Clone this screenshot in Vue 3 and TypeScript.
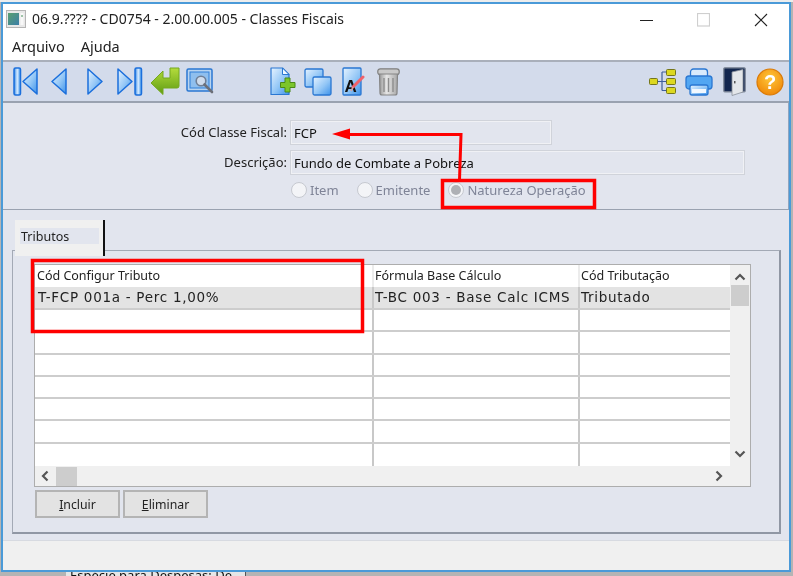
<script setup lang="ts">
const rows: string[][] = [
  ['T-FCP 001a - Perc 1,00%', 'T-BC 003 - Base Calc ICMS', 'Tributado'],
  ['', '', ''], ['', '', ''], ['', '', ''], ['', '', ''], ['', '', ''], ['', '', ''], ['', '', ''],
]
const headers: string[] = ['Cód Configur Tributo', 'Fórmula Base Cálculo', 'Cód Tributação']
</script>

<template>
  <div class="screen">
    <div class="window">
      <header class="titlebar">
        <svg class="appicon" width="20" height="18" viewBox="0 0 20 18">
          <rect x="0.5" y="0.5" width="19" height="17" fill="#e8e8e8" stroke="#b5b5b5" />
          <rect x="2" y="3" width="11" height="12" fill="url(#appg)" />
          <rect x="14.5" y="3" width="3" height="12" fill="#f8f8f8" />
          <rect x="15" y="5" width="2" height="2" fill="#9fc4a8" />
          <defs>
            <linearGradient id="appg" x1="0" y1="0" x2="1" y2="1">
              <stop offset="0" stop-color="#5aa070" />
              <stop offset="1" stop-color="#3c7fa8" />
            </linearGradient>
          </defs>
        </svg>
        <span class="title">06.9.???? - CD0754 - 2.00.00.005 - Classes Fiscais</span>
        <div class="controls">
          <svg width="13" height="14" viewBox="0 0 13 14"><path d="M0 7.5h13" stroke="#222" stroke-width="1" /></svg>
          <svg width="13" height="14" viewBox="0 0 13 14"><rect x="0.5" y="0.5" width="12" height="12.5" fill="none" stroke="#cfcfcf" stroke-width="1.2" /></svg>
          <svg width="14" height="14" viewBox="0 0 14 14"><path d="M1 1l12 12M13 1L1 13" stroke="#222" stroke-width="1.1" /></svg>
        </div>
      </header>
      <nav class="menubar">
        <span>Arquivo</span>
        <span>Ajuda</span>
      </nav>

      <div class="toolbar">
        <svg width="0" height="0" class="defs">
          <defs>
            <linearGradient id="blue" x1="0" y1="0" x2="1" y2="1">
              <stop offset="0" stop-color="#e6f3ff" />
              <stop offset="0.55" stop-color="#92c6f6" />
              <stop offset="1" stop-color="#3d92ea" />
            </linearGradient>
            <linearGradient id="blueBar" x1="0" y1="0" x2="1" y2="0">
              <stop offset="0" stop-color="#2f86e6" />
              <stop offset="0.5" stop-color="#d8ecff" />
              <stop offset="1" stop-color="#3f94ea" />
            </linearGradient>
            <linearGradient id="green" x1="0" y1="0" x2="0" y2="1">
              <stop offset="0" stop-color="#b4dc3c" />
              <stop offset="1" stop-color="#5f9c12" />
            </linearGradient>
            <linearGradient id="grayBin" x1="0" y1="0" x2="1" y2="0">
              <stop offset="0" stop-color="#9a9a9a" />
              <stop offset="0.4" stop-color="#e6e6e6" />
              <stop offset="1" stop-color="#a8a8a8" />
            </linearGradient>
            <radialGradient id="orange" cx="0.5" cy="0.35" r="0.7">
              <stop offset="0" stop-color="#ffc83a" />
              <stop offset="1" stop-color="#ef8405" />
            </radialGradient>
          </defs>
        </svg>
        <div class="tb-group first">
          <svg class="ic" width="25" height="29" viewBox="0 0 25 29">
            <rect x="1" y="1" width="6.5" height="27" rx="1.5" fill="url(#blueBar)" stroke="#1b6fdc" stroke-width="1.5" />
            <path d="M24 2 L10 14.5 L24 27 Z" fill="url(#blue)" stroke="#1b6fdc" stroke-width="1.5" stroke-linejoin="round" />
          </svg>
          <svg class="ic gap13" width="16" height="29" viewBox="0 0 16 29">
            <path d="M15 2 L1 14.5 L15 27 Z" fill="url(#blue)" stroke="#1b6fdc" stroke-width="1.5" stroke-linejoin="round" />
          </svg>
          <svg class="ic gap20" width="16" height="29" viewBox="0 0 16 29">
            <path d="M1 2 L15 14.5 L1 27 Z" fill="url(#blue)" stroke="#1b6fdc" stroke-width="1.5" stroke-linejoin="round" />
          </svg>
          <svg class="ic gap14" width="26" height="29" viewBox="0 0 26 29">
            <path d="M1 2 L15 14.5 L1 27 Z" fill="url(#blue)" stroke="#1b6fdc" stroke-width="1.5" stroke-linejoin="round" />
            <rect x="18" y="1" width="6.5" height="27" rx="1.5" fill="url(#blueBar)" stroke="#1b6fdc" stroke-width="1.5" />
          </svg>
          <svg class="ic gap7" width="30" height="29" viewBox="0 0 30 29">
            <path d="M20 1 H29 V19 Q29 21 27 21 H13 V27.5 L1 16 L13 4 V11 H20 Z" fill="url(#green)" stroke="#74a81e" stroke-width="1" stroke-linejoin="round" />
          </svg>
          <svg class="ic gap6" width="28" height="28" viewBox="0 0 28 28">
            <rect x="1" y="1" width="25" height="22" rx="1.5" fill="#b8d4f0" stroke="#2a77d2" stroke-width="1.5" />
            <rect x="4" y="4" width="19" height="16" fill="#8fbfee" stroke="#2f7fd8" stroke-width="1" />
            <circle cx="15" cy="13" r="4.8" fill="#cfdcec" stroke="#6f7f96" stroke-width="1.6" />
            <path d="M18.5 16.5 L26 24" stroke="#6c6f78" stroke-width="2.6" stroke-linecap="round" />
          </svg>
        </div>
        <div class="tb-group second">
          <svg class="ic" width="26" height="29" viewBox="0 0 26 29">
            <path d="M1 1 H12.5 L19 7.5 V27.5 H1 Z" fill="url(#blue)" stroke="#2a77d2" stroke-width="1.2" stroke-linejoin="round" />
            <path d="M12.5 1 V7.5 H19 Z" fill="#f1f8ff" stroke="#2a77d2" stroke-width="1" stroke-linejoin="round" />
            <path d="M15 11 H20 V15.5 H25 V20.5 H20 V25 H15 V20.5 H10.5 V15.5 H15 Z" fill="#7cc52c" stroke="#4b8a18" stroke-width="1" stroke-linejoin="round" />
          </svg>
          <svg class="ic gap8" width="28" height="28" viewBox="0 0 28 28">
            <rect x="1" y="1" width="18" height="18" rx="1.5" fill="url(#blue)" stroke="#2a77d2" stroke-width="1.3" />
            <rect x="9" y="9" width="18" height="18" rx="1.5" fill="url(#blue)" stroke="#2a77d2" stroke-width="1.3" />
          </svg>
          <svg class="ic gap11" width="23" height="29" viewBox="0 0 23 29">
            <rect x="1" y="1" width="18" height="27" rx="1" fill="url(#blue)" stroke="#2a77d2" stroke-width="1.3" />
            <text x="2.5" y="25" class="icon-a">A</text>
            <path d="M11 20 L21 10" stroke="#f0626a" stroke-width="3" stroke-linecap="round" />
            <path d="M9 24 L11 20" stroke="#d8a0a0" stroke-width="1.5" />
          </svg>
          <svg class="ic gap12" width="23" height="28" viewBox="0 0 23 28">
            <rect x="0.8" y="0.8" width="21.4" height="6" rx="2.5" fill="#c9c9c9" stroke="#7e7e7e" stroke-width="1.2" />
            <path d="M2.5 6 H20.5 L20 25 Q20 27 18 27 H5 Q3 27 3 25 Z" fill="url(#grayBin)" stroke="#858585" stroke-width="1.2" />
            <path d="M7 10v14M11.5 10v14M16 10v14" stroke="#8d8d8d" stroke-width="1.4" />
          </svg>
        </div>
        <div class="tb-group third">
          <svg class="ic" width="27" height="25" viewBox="0 0 27 25">
            <path d="M8 12.5 H13 M13 3 V21.5 M13 3 H17 M13 12.5 H17 M13 21.5 H17" fill="none" stroke="#3f5f9c" stroke-width="1.2" />
            <rect x="0.5" y="9.5" width="8" height="6" rx="1" fill="#dcd820" stroke="#75761c" />
            <rect x="17.5" y="0.5" width="9" height="6" rx="1" fill="#dcd820" stroke="#75761c" />
            <rect x="17.5" y="9.5" width="9" height="6" rx="1" fill="#dcd820" stroke="#75761c" />
            <rect x="17.5" y="18.5" width="9" height="6" rx="1" fill="#dcd820" stroke="#75761c" />
          </svg>
          <svg class="ic gap9" width="28" height="28" viewBox="0 0 28 28">
            <rect x="5.5" y="1" width="17" height="9" rx="3" fill="#d8eafc" stroke="#2a77d2" stroke-width="1.3" />
            <rect x="1" y="8" width="26" height="13" rx="3" fill="#52a6f2" stroke="#2a77d2" stroke-width="1.3" />
            <rect x="5" y="17" width="18" height="10" rx="2" fill="url(#blue)" stroke="#2a77d2" stroke-width="1.3" />
            <rect x="7" y="21" width="14" height="4" fill="#f2f8ff" />
          </svg>
          <svg class="ic gap10" width="23" height="29" viewBox="0 0 23 29">
            <rect x="0.8" y="0.8" width="21.4" height="24" rx="1" fill="#13274f" stroke="#7d8797" stroke-width="1.3" />
            <path d="M9 5 L20 2.5 V25 L9 28.5 Z" fill="#e3e6ea" stroke="#8a909a" stroke-width="0.8" />
            <rect x="11" y="14" width="1.5" height="2.4" fill="#555" />
          </svg>
          <svg class="ic gap10" width="28" height="28" viewBox="0 0 28 28">
            <circle cx="14" cy="14" r="13" fill="url(#orange)" stroke="#d97a08" stroke-width="1.2" />
            <text x="14" y="21" text-anchor="middle" class="icon-q">?</text>
          </svg>
        </div>
      </div>

      <section class="header-panel">
        <div class="field-row">
          <label class="label">Cód Classe Fiscal:</label>
          <div class="input short">FCP</div>
        </div>
        <div class="field-row">
          <label class="label">Descrição:</label>
          <div class="input long">Fundo de Combate a Pobreza</div>
        </div>
        <div class="radios">
          <span class="radio"><i class="dot"></i>Item</span>
          <span class="radio r2"><i class="dot"></i>Emitente</span>
          <span class="radio r3"><i class="dot on"></i>Natureza Operação</span>
        </div>
      </section>

      <main class="tabs-area">
        <div class="tab"><span class="tab-focus">Tributos</span></div>
        <div class="tab-panel">
          <div class="grid">
            <div class="table">
              <div class="row head">
                <div v-for="h in headers" :key="h" class="cell">{{ h }}</div>
              </div>
              <div v-for="(r, i) in rows" :key="i" class="row" :class="{ selected: i === 0, last: i === rows.length - 1 }">
                <div v-for="(c, j) in r" :key="j" class="cell value">{{ c }}</div>
              </div>
            </div>
            <div class="vscroll">
              <svg width="14" height="10" viewBox="0 0 14 10" class="up"><path d="M2.5 7.5L7 3l4.5 4.5" fill="none" stroke="#555" stroke-width="2.2" /></svg>
              <div class="vthumb"></div>
              <svg width="14" height="10" viewBox="0 0 14 10" class="down"><path d="M2.5 2.5L7 7l4.5-4.5" fill="none" stroke="#555" stroke-width="2.2" /></svg>
            </div>
            <div class="hscroll">
              <svg width="10" height="14" viewBox="0 0 10 14" class="left"><path d="M7.5 2.5L3 7l4.5 4.5" fill="none" stroke="#555" stroke-width="2.2" /></svg>
              <div class="hthumb"></div>
              <svg width="10" height="14" viewBox="0 0 10 14" class="right"><path d="M2.5 2.5L7 7l-4.5 4.5" fill="none" stroke="#555" stroke-width="2.2" /></svg>
            </div>
            <div class="corner"></div>
          </div>
          <div class="buttons">
            <button class="btn"><u>I</u>ncluir</button>
            <button class="btn"><u>E</u>liminar</button>
          </div>
        </div>
      </main>
      <footer class="statusbar"></footer>
    </div>
    <div class="behind"><span>Espécie para Despesas: De</span></div>

    <svg class="annotations" width="793" height="576" viewBox="0 0 793 576">
      <rect x="442.5" y="180.5" width="152" height="27" fill="none" stroke="#f00" stroke-width="3.5" />
      <rect x="32.5" y="260.5" width="330" height="71" fill="none" stroke="#f00" stroke-width="3.5" />
      <path d="M459.5 180 L461 134.5 H345" fill="none" stroke="#f00" stroke-width="3" />
      <path d="M332 134 L350 128.5 V139.5 Z" fill="#f00" />
    </svg>
  </div>
</template>

<style>
html, body { margin: 0; background: #b4b4b4; }
</style>

<style scoped>
.screen {
  position: relative;
  width: 793px;
  height: 576px;
  overflow: hidden;
  background: linear-gradient(#ededed 0 2px, #b4b4b4 2px);
  font-family: "Noto Sans", "Open Sans", sans-serif;
  color: #1a1a1a;
  padding-top: 2px;
  box-sizing: border-box;
  filter: blur(0.35px);
}
.window {
  margin-left: 1px;
  width: 790px;
  height: 570px;
  box-sizing: border-box;
  border: 2px solid #4a9ad8;
  background: #fff;
  display: flex;
  flex-direction: column;
}
.titlebar {
  height: 30px;
  display: flex;
  align-items: center;
  padding-left: 3px;
  box-sizing: border-box;
}
.title { font-size: 14px; margin-left: 6px; color: #222; padding-bottom: 2px; }
.controls {
  margin-left: auto;
  display: flex;
  align-items: center;
  gap: 44px;
  padding-right: 21px;
  padding-top: 2px;
}
.menubar {
  height: 26px;
  display: flex;
  gap: 16px;
  padding-left: 9px;
  font-size: 14.5px;
  align-items: center;
  padding-bottom: 2px;
  box-sizing: border-box;
  color: #222;
}
.toolbar {
  height: 43px;
  box-sizing: border-box;
  border-top: 2px solid #a9afba;
  border-bottom: 2px solid #9aa2b0;
  background: #d3dbeb;
  display: flex;
  align-items: center;
  padding-left: 10px;
  padding-right: 5px;
}
.defs { position: absolute; }
.tb-group { display: flex; align-items: center; }
.second { margin-left: 56px; }
.third { margin-left: auto; }
.ic { display: block; flex: none; }
.gap6 { margin-left: 6px; }
.gap7 { margin-left: 7px; }
.gap8 { margin-left: 8px; }
.gap9 { margin-left: 9px; }
.gap10 { margin-left: 10px; }
.gap11 { margin-left: 10px; }
.gap12 { margin-left: 12px; }
.gap13 { margin-left: 13px; }
.gap14 { margin-left: 14px; }
.gap20 { margin-left: 20px; }
.icon-a { font: bold 17px "Liberation Sans", sans-serif; fill: #111; }
.icon-q { font: bold 20px "Liberation Sans", sans-serif; fill: #fff; }
.header-panel {
  height: 107px;
  box-sizing: border-box;
  background: #e2e5ee;
  border-bottom: 1px solid #9aa2b0;
  border-right: 1px solid #8fa5c0;
  padding-top: 17px;
  font-size: 13px;
}
.field-row { display: flex; align-items: center; height: 25px; margin-bottom: 5px; }
.label { width: 284px; text-align: right; margin-right: 3px; color: #222; padding-bottom: 2px; }
.input {
  box-sizing: border-box;
  height: 25px;
  border: 2px solid #f0f1f5;
  outline: 1px solid #d0d3da;
  outline-offset: -1px;
  padding-left: 2px;
  line-height: 22px;
  color: #111;
}
.short { width: 262px; }
.long { width: 455px; }
.radios {
  display: flex;
  align-items: center;
  height: 20px;
  margin-left: 288px;
  color: #7f8497;
  font-size: 13px;
  margin-top: 1px;
}
.radio { display: flex; align-items: center; gap: 3px; }
.r2 { margin-left: 18px; }
.r3 { margin-left: 18px; }
.dot {
  display: block;
  width: 16px;
  height: 16px;
  box-sizing: border-box;
  border: 1.5px solid #c6c9d0;
  border-radius: 50%;
  background: #f3f4f7;
  position: relative;
}
.dot.on::after {
  content: "";
  position: absolute;
  inset: 2px;
  border-radius: 50%;
  background: #aeb0b5;
}
.tabs-area {
  flex: 1;
  background: #e2e5ee;
  padding: 10px 8px 6px 9px;
  display: flex;
  flex-direction: column;
  position: relative;
  min-height: 0;
}
.tab {
  position: relative;
  z-index: 1;
  align-self: flex-start;
  margin-left: 3px;
  margin-bottom: -6px;
  width: 90px;
  height: 36px;
  box-sizing: border-box;
  background: #f0f0f0;
  border-right: 2px solid #111;
  padding: 8px 4px 0 5px;
  font-size: 12.5px;
}
.tab-focus {
  display: block;
  height: 16px;
  line-height: 18px;
  background: #e2e5ee;
  padding-left: 1px;
  color: #222;
}
.tab-panel {
  flex: 1;
  border: 1px solid #a3a9b5;
  border-bottom: 2px solid #9097a4;
  border-right: 2px solid #9097a4;
  padding: 13px 0 0 21px;
  min-height: 0;
}
.grid {
  box-sizing: border-box;
  width: 717px;
  height: 223px;
  border: 1px solid #adadad;
  background: #f0f0f0;
  display: grid;
  grid-template-columns: 1fr 20px;
  grid-template-rows: 1fr 20px;
}
.table {
  background: #fff;
  display: grid;
  grid-template-rows: 22px repeat(8, 1fr);
  min-height: 0;
  font-size: 13px;
}
.row {
  display: grid;
  grid-template-columns: 339px 206px 1fr;
  border-bottom: 2px solid #cdcdcd;
  box-sizing: border-box;
}
.row.head { border-bottom: none; }
.row.last { border-bottom: none; }
.selected { background: #e3e3e3; }
.cell {
  box-sizing: border-box;
  border-right: 2px solid #c8c8c8;
  padding-left: 2px;
  white-space: nowrap;
  overflow: hidden;
  line-height: 22px;
  color: #222;
  font-size: 12.5px;
}
.cell:last-child { border-right: none; }
.cell:not(:first-child) { padding-left: 1px; }
.head .cell { border-right-color: #ececec; }
.value {
  font-family: "DejaVu Sans", sans-serif;
  font-size: 13.5px;
  letter-spacing: 0.72px;
  padding-left: 3px;
  line-height: 21px;
}
.vscroll {
  position: relative;
  display: flex;
  flex-direction: column;
  align-items: center;
}
.vscroll .up { margin-top: 7px; }
.vthumb {
  margin-top: 3px;
  width: 18px;
  height: 21px;
  background: #cdcdcd;
}
.vscroll .down { margin-top: auto; margin-bottom: 7px; }
.hscroll {
  display: flex;
  align-items: center;
  padding-left: 5px;
}
.hthumb {
  margin-left: 6px;
  width: 21px;
  height: 19px;
  background: #cdcdcd;
}
.hscroll .right { margin-left: auto; margin-right: 6px; }
.corner { background: #f0f0f0; }
.buttons {
  margin-top: 3px;
  margin-left: 1px;
  display: flex;
  gap: 3px;
}
.btn {
  width: 85px;
  height: 28px;
  box-sizing: border-box;
  border: 2px solid #b4b4b4;
  background: #e3e3e3;
  font-family: inherit;
  font-size: 12.3px;
  color: #222;
  padding: 0;
}
.statusbar {
  height: 30px;
  box-sizing: border-box;
  background: #f0f0f0;
  border-top: 1px solid #d7dae1;
}
.behind {
  margin-left: 66px;
  padding-left: 4px;
  width: 175px;
  height: 4px;
  font-size: 13px;
  color: #111;
  line-height: 1;
  overflow: hidden;
  background: #e6e6e6;
  border-right: 1px solid #555;
}
.behind span { display: block; margin-top: -3px; }
.annotations {
  position: absolute;
  left: 0;
  top: 0;
  pointer-events: none;
}
</style>
